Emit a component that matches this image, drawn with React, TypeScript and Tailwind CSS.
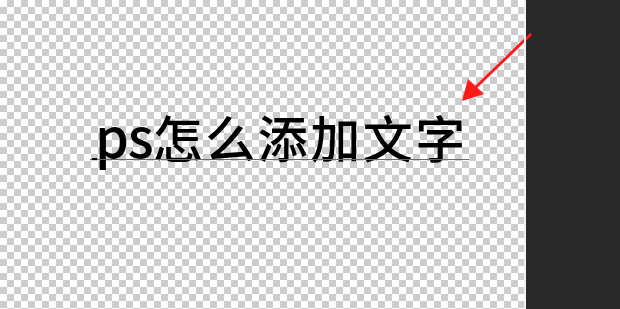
export default function App() {
  return (
    <div className="flex w-[620px] h-[309px] overflow-hidden bg-[#282828]">
      {/* transparent canvas */}
      <div className="relative w-[524px] h-full bg-[conic-gradient(#cdcdcd_25%,#ffffff_0_50%,#cdcdcd_0_75%,#ffffff_0)] bg-[length:14px_14px]">
        <div className="pl-[95px] pt-[104px]">
          <div className="relative inline-block">
            <span
              className="flex items-baseline leading-[62px] font-medium text-black whitespace-nowrap"
              style={{ fontFamily: '"Noto Sans CJK SC", sans-serif' }}
            >
              <span className="text-[54px] tracking-[-1px]">ps</span>
              <span className="text-[50px] tracking-[2.5px]">怎么添加文字</span>
            </span>
            <div className="absolute left-[-5px] right-[-1px] top-[55px] h-px bg-[#6b6b6b]" />
            <div className="absolute left-[-3px] top-[54px] w-[5px] h-[2px] bg-black" />
          </div>
        </div>
        <svg className="absolute left-0 top-0" width="524" height="309">
          <line x1="531" y1="34" x2="474" y2="89" stroke="#ff1a1a" strokeWidth="3" />
          <polygon points="462,101 468,79 484,94" fill="#ff1a1a" />
        </svg>
      </div>
      <div className="w-[2px] h-full bg-[#f2f2f2]" />
      <div className="relative flex-1 h-full bg-[#282828]">
        <svg className="absolute left-0 top-0" width="94" height="309">
          <line x1="5" y1="34" x2="-2" y2="41" stroke="#ff1a1a" strokeWidth="3" />
        </svg>
      </div>
    </div>
  );
}
